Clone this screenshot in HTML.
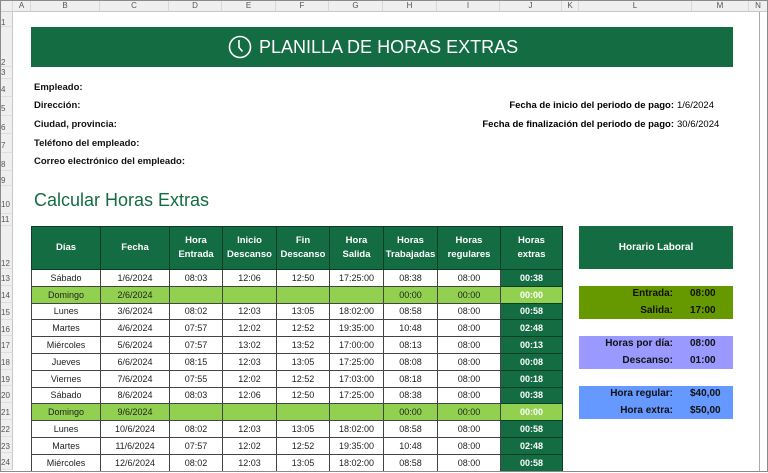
<!DOCTYPE html>
<html><head><meta charset="utf-8"><style>
*{margin:0;padding:0;box-sizing:border-box}
body{width:768px;height:472px;overflow:hidden;background:#fff;font-family:"Liberation Sans",sans-serif;position:relative}
.ab{position:absolute}
.ch{position:absolute;top:0;height:12px;background:#efefef;border-bottom:1px solid #c8c8c8;font-size:8px;color:#555;text-align:center;line-height:12px;border-right:1px solid #d8d8d8}
.rn{position:absolute;left:0;width:13px;background:#efefef;border-right:1px solid #c8c8c8;font-size:8px;color:#555;padding-left:1px;border-bottom:1px solid #ddd}
.lbl{position:absolute;left:34px;font-size:9.5px;font-weight:bold;color:#111}
table{position:absolute;left:31px;top:226px;border-collapse:collapse;font-family:"Liberation Sans",sans-serif}
td{border:1px solid #444;font-size:9px;text-align:center;height:16.8px;padding:0;color:#222}
th{background:#146c43;color:#fff;font-size:9.5px;font-weight:bold;height:43px;border:1px solid #0c3d25;line-height:14px}
tr.d td{background:#92d050;color:#222}
td.x{background:#146c43;color:#fff;font-weight:bold;border-color:#0c3d25}
tr.d td.x{background:#92d050;color:#fff}
.box{position:absolute;left:579px;width:154px;font-size:10px;font-weight:bold;color:#111}
.box div{height:16.5px;line-height:16.5px;position:relative}
.box span{position:absolute;right:60px}
.box b{position:absolute;left:111px}
</style></head><body>
<div class="ch" style="left:0;width:13px"></div>
<div class="ch" style="left:13px;width:18px">A</div>
<div class="ch" style="left:31px;width:69px">B</div>
<div class="ch" style="left:100px;width:69px">C</div>
<div class="ch" style="left:169px;width:53px">D</div>
<div class="ch" style="left:222px;width:54px">E</div>
<div class="ch" style="left:276px;width:53px">F</div>
<div class="ch" style="left:329px;width:54px">G</div>
<div class="ch" style="left:383px;width:54px">H</div>
<div class="ch" style="left:437px;width:63px">I</div>
<div class="ch" style="left:500px;width:62px">J</div>
<div class="ch" style="left:562px;width:17px">K</div>
<div class="ch" style="left:579px;width:113px">L</div>
<div class="ch" style="left:692px;width:57px">M</div>
<div class="ch" style="left:749px;width:19px">N</div>

<div class="rn" style="top:12px;height:15px;line-height:22px">1</div>
<div class="rn" style="top:27px;height:40px;line-height:72px">2</div>
<div class="rn" style="top:67px;height:12px;line-height:12px">3</div>
<div class="rn" style="top:79px;height:18px;line-height:22px">4</div>
<div class="rn" style="top:97px;height:19px;line-height:24px">5</div>
<div class="rn" style="top:116px;height:18px;line-height:24px">6</div>
<div class="rn" style="top:134px;height:19px;line-height:24px">7</div>
<div class="rn" style="top:153px;height:18px;line-height:24px">8</div>
<div class="rn" style="top:171px;height:15px;line-height:20px">9</div>
<div class="rn" style="top:186px;height:28px;line-height:38px">10</div>
<div class="rn" style="top:214px;height:12px;line-height:12px">11</div>
<div class="rn" style="top:226px;height:43px;line-height:76px">12</div>
<div class="rn" style="top:269px;height:17px;line-height:20px">13</div>
<div class="rn" style="top:286px;height:17px;line-height:20px">14</div>
<div class="rn" style="top:303px;height:17px;line-height:20px">15</div>
<div class="rn" style="top:320px;height:16px;line-height:20px">16</div>
<div class="rn" style="top:336px;height:17px;line-height:20px">17</div>
<div class="rn" style="top:353px;height:17px;line-height:20px">18</div>
<div class="rn" style="top:370px;height:16px;line-height:20px">19</div>
<div class="rn" style="top:386px;height:17px;line-height:20px">20</div>
<div class="rn" style="top:403px;height:17px;line-height:20px">21</div>
<div class="rn" style="top:420px;height:17px;line-height:20px">22</div>
<div class="rn" style="top:437px;height:16px;line-height:20px">23</div>
<div class="rn" style="top:453px;height:17px;line-height:20px">24</div>

<div class="ab" style="left:31px;top:27px;width:702px;height:40px;background:#146c43"></div>
<svg class="ab" style="left:228px;top:35px" width="24" height="24" viewBox="0 0 24 24"><circle cx="12" cy="12" r="10.5" fill="none" stroke="#fff" stroke-width="1.6"/><path d="M11 5v7.5l3.5 4" fill="none" stroke="#fff" stroke-width="1.6"/></svg>
<div class="ab" style="left:259px;top:37px;font-size:18px;color:#fff;">PLANILLA DE HORAS EXTRAS</div>

<div class="lbl" style="top:82px">Empleado:</div>
<div class="lbl" style="top:100px">Dirección:</div>
<div class="lbl" style="top:119px">Ciudad, provincia:</div>
<div class="lbl" style="top:138px">Teléfono del empleado:</div>
<div class="lbl" style="top:156px">Correo electrónico del empleado:</div>
<div class="ab" style="right:94px;top:100px;font-size:9.5px;font-weight:bold">Fecha de inicio del periodo de pago:</div>
<div class="ab" style="left:677px;top:100px;font-size:9.5px">1/6/2024</div>
<div class="ab" style="right:94px;top:119px;font-size:9.5px;font-weight:bold">Fecha de finalización del periodo de pago:</div>
<div class="ab" style="left:677px;top:119px;font-size:9.5px">30/6/2024</div>
<div class="ab" style="left:34px;top:190px;font-size:18px;color:#146c43">Calcular Horas Extras</div>

<table>
<colgroup><col style="width:69px"><col style="width:69px"><col style="width:53px"><col style="width:54px"><col style="width:53px"><col style="width:54px"><col style="width:54px"><col style="width:63px"><col style="width:62px"></colgroup>
<tr><th>Días</th><th>Fecha</th><th>Hora<br>Entrada</th><th>Inicio<br>Descanso</th><th>Fin<br>Descanso</th><th>Hora<br>Salida</th><th>Horas<br>Trabajadas</th><th>Horas<br>regulares</th><th>Horas<br>extras</th></tr>
<tr><td>Sábado</td><td>1/6/2024</td><td>08:03</td><td>12:06</td><td>12:50</td><td>17:25:00</td><td>08:38</td><td>08:00</td><td class="x">00:38</td></tr>
<tr class="d"><td>Domingo</td><td>2/6/2024</td><td></td><td></td><td></td><td></td><td>00:00</td><td>00:00</td><td class="x">00:00</td></tr>
<tr><td>Lunes</td><td>3/6/2024</td><td>08:02</td><td>12:03</td><td>13:05</td><td>18:02:00</td><td>08:58</td><td>08:00</td><td class="x">00:58</td></tr>
<tr><td>Martes</td><td>4/6/2024</td><td>07:57</td><td>12:02</td><td>12:52</td><td>19:35:00</td><td>10:48</td><td>08:00</td><td class="x">02:48</td></tr>
<tr><td>Miércoles</td><td>5/6/2024</td><td>07:57</td><td>13:02</td><td>13:52</td><td>17:00:00</td><td>08:13</td><td>08:00</td><td class="x">00:13</td></tr>
<tr><td>Jueves</td><td>6/6/2024</td><td>08:15</td><td>12:03</td><td>13:05</td><td>17:25:00</td><td>08:08</td><td>08:00</td><td class="x">00:08</td></tr>
<tr><td>Viernes</td><td>7/6/2024</td><td>07:55</td><td>12:02</td><td>12:52</td><td>17:03:00</td><td>08:18</td><td>08:00</td><td class="x">00:18</td></tr>
<tr><td>Sábado</td><td>8/6/2024</td><td>08:03</td><td>12:06</td><td>12:50</td><td>17:25:00</td><td>08:38</td><td>08:00</td><td class="x">00:38</td></tr>
<tr class="d"><td>Domingo</td><td>9/6/2024</td><td></td><td></td><td></td><td></td><td>00:00</td><td>00:00</td><td class="x">00:00</td></tr>
<tr><td>Lunes</td><td>10/6/2024</td><td>08:02</td><td>12:03</td><td>13:05</td><td>18:02:00</td><td>08:58</td><td>08:00</td><td class="x">00:58</td></tr>
<tr><td>Martes</td><td>11/6/2024</td><td>07:57</td><td>12:02</td><td>12:52</td><td>19:35:00</td><td>10:48</td><td>08:00</td><td class="x">02:48</td></tr>
<tr><td>Miércoles</td><td>12/6/2024</td><td>08:02</td><td>12:03</td><td>13:05</td><td>18:02:00</td><td>08:58</td><td>08:00</td><td class="x">00:58</td></tr>
</table>

<div class="box" style="top:226px;height:43px;background:#146c43;color:#fff;text-align:center;line-height:43px;font-size:10px">Horario Laboral</div>
<div class="box" style="top:286px;height:33px;background:#669900"><div><span>Entrada:</span><b>08:00</b></div><div><span>Salida:</span><b>17:00</b></div></div>
<div class="box" style="top:336px;height:33px;background:#9999ff"><div><span>Horas por día:</span><b>08:00</b></div><div><span>Descanso:</span><b>01:00</b></div></div>
<div class="box" style="top:386px;height:33px;background:#6699ff"><div><span>Hora regular:</span><b>$40,00</b></div><div><span>Hora extra:</span><b>$50,00</b></div></div>
<div class="ab" style="left:759px;top:12px;width:1px;height:460px;background:#aaa"></div>
<div class="ab" style="left:0;top:0;width:768px;height:472px;border:1px solid #8a8a8a"></div>
</body></html>
